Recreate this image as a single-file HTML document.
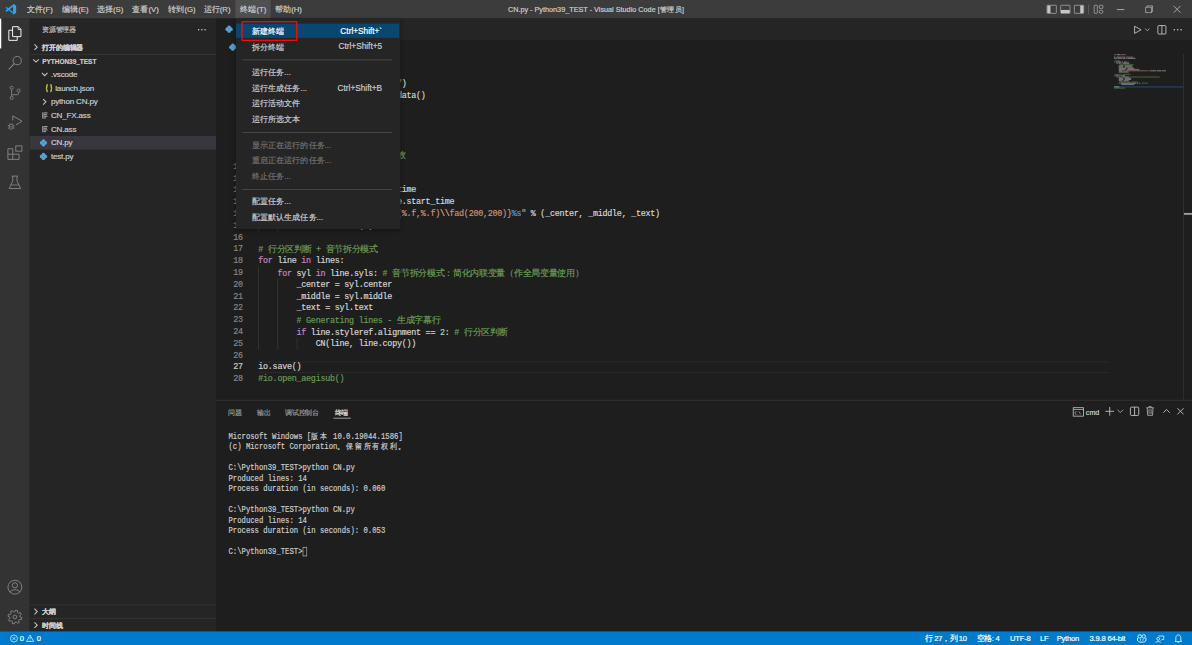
<!DOCTYPE html>
<html><head><meta charset="utf-8"><style>
html,body{margin:0;padding:0;width:1192px;height:645px;overflow:hidden;background:#1e1e1e;}
*{box-sizing:border-box;}
#root{position:absolute;left:0;top:0;width:1920px;height:1039px;-webkit-text-stroke:0.3px;transform:scale(0.6208333);transform-origin:0 0;font-family:"Liberation Sans",sans-serif;color:#cccccc;overflow:hidden;background:#1e1e1e;}
.a{position:absolute;}
svg{position:absolute;overflow:visible;}
#title{left:0;top:0;width:1920px;height:30px;background:#3c3c3c;font-size:12.5px;}
.mi{position:absolute;top:0;height:30px;line-height:30px;color:#cccccc;white-space:nowrap;}
#act{left:0;top:30px;width:48px;height:987px;background:#333333;}
#side{left:48px;top:30px;width:300px;height:987px;background:#252526;font-size:13px;letter-spacing:-0.3px;}
#editor{left:348px;top:30px;width:1572px;height:614px;background:#1e1e1e;overflow:hidden;}
#panel{left:348px;top:644px;width:1572px;height:373px;background:#1e1e1e;}
#status{left:0;top:1017px;width:1920px;height:22px;background:#007acc;color:#ffffff;font-size:12.2px;letter-spacing:-0.3px;}
.st{position:absolute;top:0;height:22px;line-height:22px;white-space:nowrap;}
.code{position:absolute;left:68px;font-family:"Liberation Mono",monospace;font-size:13.5px;letter-spacing:-0.4px;line-height:19px;height:19px;white-space:pre;color:#d4d4d4;}
.cj{font-family:"Liberation Sans",sans-serif;letter-spacing:0;font-size:14px;}
.k{color:#c586c0}.c{color:#6a9955}.s{color:#ce9178}.n{color:#b5cea8}.f{color:#569cd6}.e{color:#d7ba7d}
.ln{position:absolute;left:1px;width:42px;font-family:"Liberation Mono",monospace;font-size:13.5px;letter-spacing:-0.4px;line-height:19px;color:#858585;text-align:right;white-space:pre;}
#menu{left:379.5px;top:30px;width:265px;height:338.5px;background:#252526;box-shadow:0 2px 8px rgba(0,0,0,0.55);font-size:12.5px;}
.it{position:absolute;left:0;width:263px;height:23px;line-height:23px;color:#cccccc;white-space:nowrap;}
.it .l{position:absolute;left:26.5px;top:1.5px;}
.it .r{position:absolute;right:27px;top:0.3px;font-size:13.3px;}
.dis{color:#727272;}
.sep{position:absolute;left:10.5px;width:242px;height:1px;background:#5a5a5a;}
.row{position:absolute;left:0;width:300px;height:22px;line-height:22px;color:#cccccc;white-space:nowrap;}
.hd{font-size:11px;font-weight:bold;color:#cccccc;letter-spacing:0;}
.term{position:absolute;left:20px;font-family:"Liberation Mono",monospace;font-size:13.4px;letter-spacing:0;transform:scaleX(0.8731);transform-origin:0 0;line-height:17px;white-space:pre;color:#cccccc;}
.tcj{font-family:"Liberation Sans",sans-serif;letter-spacing:3.1px;font-size:13px;}
.ig{position:absolute;width:1px;background:#404040;}
</style></head><body><div id="root">
<div id="title" class="a">
<svg style="left:0px;top:0px;width:30px;height:30px" viewBox="0 0 30 30" ><path d="M10.3 12.2 L22 21.6" stroke="#1e95e0" stroke-width="2.4" stroke-linecap="round"/><path d="M10.3 17.4 L22 8.2" stroke="#29a8f5" stroke-width="2.6" stroke-linecap="round"/><path d="M21 6.6 L25.2 8.5 Q26 8.9 26 9.8 V20.2 Q26 21.1 25.2 21.5 L21 23.4 Z" fill="#2aa5f0"/></svg>
<div class="mi" style="left:43px">文件(F)</div>
<div class="mi" style="left:100px">编辑(E)</div>
<div class="mi" style="left:156px">选择(S)</div>
<div class="mi" style="left:213px">查看(V)</div>
<div class="mi" style="left:271px">转到(G)</div>
<div class="mi" style="left:328px">运行(R)</div>
<div class="a" style="left:379px;top:0;width:57px;height:30px;background:#505050"></div>
<div class="mi" style="left:387px">终端(T)</div>
<div class="mi" style="left:443px">帮助(H)</div>
<div class="mi" style="left:0;top:1px;width:1920px;text-align:center;font-size:11.7px">CN.py - Python39_TEST - Visual Studio Code [管理员]</div>
<svg style="left:1686px;top:8px;width:16px;height:14px" viewBox="0 0 16 14" ><rect x="0.5" y="0.5" width="15" height="13" rx="1" fill="none" stroke="#c5c5c5"/><rect x="1" y="1" width="5" height="12" fill="#c5c5c5"/></svg>
<svg style="left:1708px;top:8px;width:16px;height:14px" viewBox="0 0 16 14" ><rect x="0.5" y="0.5" width="15" height="13" rx="1" fill="none" stroke="#c5c5c5"/><rect x="1" y="8" width="14" height="5" fill="#c5c5c5"/></svg>
<svg style="left:1730px;top:8px;width:16px;height:14px" viewBox="0 0 16 14" ><rect x="0.5" y="0.5" width="15" height="13" rx="1" fill="none" stroke="#c5c5c5"/><rect x="10" y="1" width="5" height="12" fill="#c5c5c5"/></svg>
<div class="a" style="left:1753px;top:7px;width:1px;height:16px;background:#6a6a6a"></div>
<svg style="left:1762px;top:8px;width:15px;height:14px" viewBox="0 0 15 14" ><rect x="0.5" y="0.5" width="5" height="13" rx="1" fill="none" stroke="#c5c5c5"/><rect x="8.5" y="0.5" width="6" height="5" rx="1" fill="none" stroke="#c5c5c5"/><rect x="8.5" y="8.5" width="6" height="5" rx="2.5" fill="none" stroke="#c5c5c5"/></svg>
<svg style="left:1799px;top:15px;width:12px;height:2px" viewBox="0 0 12 2" ><rect x="0" y="0" width="12" height="1.2" fill="#c5c5c5"/></svg>
<svg style="left:1845px;top:9px;width:12px;height:12px" viewBox="0 0 12 12" ><rect x="0.5" y="2.5" width="9" height="9" fill="none" stroke="#c5c5c5"/><path d="M2.5 2.5 V0.5 H11.5 V9.5 H9.5" fill="none" stroke="#c5c5c5"/></svg>
<svg style="left:1890px;top:9px;width:12px;height:12px" viewBox="0 0 12 12" ><path d="M0.5 0.5 L11.5 11.5 M11.5 0.5 L0.5 11.5" stroke="#c5c5c5" stroke-width="1.2"/></svg>
</div>
<div id="act" class="a">
<div class="a" style="left:0;top:0;width:2px;height:48px;background:#ffffff"></div>
<svg style="left:0;top:0;width:48px;height:987px" viewBox="0 0 48 987"><path d="M20.25 13 H29.5 L33.75 17.25 V29 H20.25 Z" fill="none" stroke="#fff" stroke-width="1.5" stroke-linejoin="round"/><path d="M29.2 13 V17.5 H33.75" fill="none" stroke="#fff" stroke-width="1.2"/><path d="M20.25 18.75 H14.25 V35 H27.75 V29" fill="none" stroke="#fff" stroke-width="1.5" stroke-linejoin="round"/><circle cx="27.7" cy="67.6" r="6.6" fill="none" stroke="#858585" stroke-width="1.5"/><path d="M23 72.5 L14.5 81.5" stroke="#858585" stroke-width="1.7" stroke-linecap="round"/><circle cx="18.7" cy="111.4" r="2.5" fill="none" stroke="#858585" stroke-width="1.4"/><circle cx="18.7" cy="127.7" r="2.5" fill="none" stroke="#858585" stroke-width="1.4"/><circle cx="30" cy="115.9" r="2.5" fill="none" stroke="#858585" stroke-width="1.4"/><path d="M18.7 113.9 V125.2 M30 118.4 V120.3 Q30 122.6 27.7 122.6 H18.7" fill="none" stroke="#858585" stroke-width="1.4"/><path d="M20.6 164 V156.5 L35.5 165.3 L25.8 171" fill="none" stroke="#858585" stroke-width="1.5" stroke-linejoin="round"/><ellipse cx="18" cy="174" rx="3.4" ry="4.3" fill="none" stroke="#858585" stroke-width="1.4"/><path d="M12.5 172 H14.6 M12.5 176.5 H14.6 M21.4 172 H23.5 M21.4 176.5 H23.5 M15.5 169 L16.5 170.3 M20.5 169 L19.5 170.3 M14.6 174.2 H21.4" stroke="#858585" stroke-width="1.2"/><path d="M12.75 209.6 H20.6 V218.4 H30.75 V226.75 H12.75 Z M12.75 218.4 H20.6 V226.75" fill="none" stroke="#858585" stroke-width="1.5" stroke-linejoin="round"/><rect x="25.4" y="205" width="9.9" height="8.5" fill="none" stroke="#858585" stroke-width="1.5"/><path d="M18.5 253.7 H29 M20.6 253.7 V261.5 L14.8 273.6 H33.2 L27.4 261.5 V253.7" fill="none" stroke="#858585" stroke-width="1.5" stroke-linejoin="round"/><path d="M17.3 267.9 H30.7" stroke="#858585" stroke-width="1.3"/><circle cx="24" cy="915.8" r="11.2" fill="none" stroke="#858585" stroke-width="1.5"/><circle cx="24" cy="912.8" r="4.2" fill="none" stroke="#858585" stroke-width="1.5"/><path d="M16.3 923.8 C18 918.6 30 918.6 31.7 923.8" fill="none" stroke="#858585" stroke-width="1.5"/><path d="M32.40 963.80 L35.15 964.85 L34.35 968.09 L31.42 967.73 L29.94 969.74 L31.14 972.43 L28.29 974.15 L26.47 971.83 L24.00 972.20 L22.95 974.95 L19.71 974.15 L20.07 971.22 L18.06 969.74 L15.37 970.94 L13.65 968.09 L15.97 966.27 L15.60 963.80 L12.85 962.75 L13.65 959.51 L16.58 959.87 L18.06 957.86 L16.86 955.17 L19.71 953.45 L21.53 955.77 L24.00 955.40 L25.05 952.65 L28.29 953.45 L27.93 956.38 L29.94 957.86 L32.63 956.66 L34.35 959.51 L32.03 961.33 Z" fill="none" stroke="#858585" stroke-width="1.5" stroke-linejoin="round"/><circle cx="24" cy="963.8" r="3" fill="none" stroke="#858585" stroke-width="1.5"/></svg>
</div>
<div id="side" class="a">
<div class="row" style="top:0;height:35px;line-height:35px;left:20px;font-size:11px;color:#bbbbbb">资源管理器</div>
<svg style="left:267px;top:10px;width:20px;height:16px" viewBox="0 0 20 16" ><circle cx="5" cy="8" r="1.3" fill="#c5c5c5"/><circle cx="10.2" cy="8" r="1.3" fill="#c5c5c5"/><circle cx="15.4" cy="8" r="1.3" fill="#c5c5c5"/></svg>
<div class="row hd" style="top:35px"><span class="a" style="left:20px">打开的编辑器</span></div>
<svg style="left:2px;top:38px;width:16px;height:16px" viewBox="0 0 16 16" ><path d="M5.5 3.5 L10 8 L5.5 12.5" fill="none" stroke="#c5c5c5" stroke-width="1.7"/></svg>
<div class="a" style="left:0;top:57px;width:300px;height:1px;background:#3c3c3c"></div>
<div class="row hd" style="top:57px"><span class="a" style="left:20px;top:1.5px;font-size:10.4px">PYTHON39_TEST</span></div>
<svg style="left:2px;top:60px;width:16px;height:16px" viewBox="0 0 16 16" ><path d="M3.5 5.5 L8 10 L12.5 5.5" fill="none" stroke="#c5c5c5" stroke-width="1.7"/></svg>
<div class="row" style="top:79px;"><span class="a" style="left:34px">.vscode</span></div>
<svg style="left:16px;top:82px;width:16px;height:16px" viewBox="0 0 16 16" ><path d="M3.5 5.5 L8 10 L12.5 5.5" fill="none" stroke="#c5c5c5" stroke-width="1.7"/></svg>
<div class="row" style="top:101px;"><span class="a" style="left:41px">launch.json</span></div>
<svg style="left:23px;top:104px;width:16px;height:16px" viewBox="0 0 16 16" ><path d="M6 2.5 C4 2.5 4.5 4.5 4.5 6 C4.5 7.2 3.8 7.8 3 8 C3.8 8.2 4.5 8.8 4.5 10 C4.5 11.5 4 13.5 6 13.5 M10 2.5 C12 2.5 11.5 4.5 11.5 6 C11.5 7.2 12.2 7.8 13 8 C12.2 8.2 11.5 8.8 11.5 10 C11.5 11.5 12 13.5 10 13.5" fill="none" stroke="#cbcb41" stroke-width="2.1"/></svg>
<div class="row" style="top:123px;"><span class="a" style="left:34px">python CN.py</span></div>
<svg style="left:16px;top:126px;width:16px;height:16px" viewBox="0 0 16 16" ><path d="M5.5 3.5 L10 8 L5.5 12.5" fill="none" stroke="#c5c5c5" stroke-width="1.7"/></svg>
<div class="row" style="top:145px;"><span class="a" style="left:34px">CN_FX.ass</span></div>
<svg style="left:16px;top:148px;width:16px;height:16px" viewBox="0 0 16 16" ><rect x="4" y="3" width="2" height="10" fill="#9da2a4"/><rect x="6.5" y="3" width="6" height="1.8" fill="#9da2a4"/><rect x="6.5" y="5.7" width="5" height="1.8" fill="#9da2a4"/><rect x="6.5" y="8.4" width="6" height="1.8" fill="#9da2a4"/><rect x="6.5" y="11.1" width="3.5" height="1.8" fill="#9da2a4"/></svg>
<div class="row" style="top:167px;"><span class="a" style="left:34px">CN.ass</span></div>
<svg style="left:16px;top:170px;width:16px;height:16px" viewBox="0 0 16 16" ><rect x="4" y="3" width="2" height="10" fill="#9da2a4"/><rect x="6.5" y="3" width="6" height="1.8" fill="#9da2a4"/><rect x="6.5" y="5.7" width="5" height="1.8" fill="#9da2a4"/><rect x="6.5" y="8.4" width="6" height="1.8" fill="#9da2a4"/><rect x="6.5" y="11.1" width="3.5" height="1.8" fill="#9da2a4"/></svg>
<div class="row" style="top:189px;background:#37373d;"><span class="a" style="left:34px">CN.py</span></div>
<svg style="left:14px;top:192px;width:16px;height:16px" viewBox="0 0 16 16" ><circle cx="8" cy="5.1" r="3" fill="#56a3d2"/><circle cx="8" cy="10.9" r="3" fill="#56a3d2"/><circle cx="5.1" cy="8" r="3" fill="#56a3d2"/><circle cx="10.9" cy="8" r="3" fill="#56a3d2"/><path d="M6.3 6.3 L9.7 9.7" stroke="#3f86b0" stroke-width="0.8"/></svg>
<div class="row" style="top:211px;"><span class="a" style="left:34px">test.py</span></div>
<svg style="left:14px;top:214px;width:16px;height:16px" viewBox="0 0 16 16" ><circle cx="8" cy="5.1" r="3" fill="#56a3d2"/><circle cx="8" cy="10.9" r="3" fill="#56a3d2"/><circle cx="5.1" cy="8" r="3" fill="#56a3d2"/><circle cx="10.9" cy="8" r="3" fill="#56a3d2"/><path d="M6.3 6.3 L9.7 9.7" stroke="#3f86b0" stroke-width="0.8"/></svg>
<div class="a" style="left:0;top:944px;width:300px;height:1px;background:#3c3c3c"></div>
<div class="row hd" style="top:944px"><span class="a" style="left:20px">大纲</span></div>
<svg style="left:2px;top:947px;width:16px;height:16px" viewBox="0 0 16 16" ><path d="M5.5 3.5 L10 8 L5.5 12.5" fill="none" stroke="#c5c5c5" stroke-width="1.7"/></svg>
<div class="a" style="left:0;top:966px;width:300px;height:1px;background:#3c3c3c"></div>
<div class="row hd" style="top:966px"><span class="a" style="left:20px">时间线</span></div>
<svg style="left:2px;top:969px;width:16px;height:16px" viewBox="0 0 16 16" ><path d="M5.5 3.5 L10 8 L5.5 12.5" fill="none" stroke="#c5c5c5" stroke-width="1.7"/></svg>
</div>
<div id="editor" class="a">
<div class="a" style="left:0;top:0;width:1572px;height:35px;background:#252526"></div>
<div class="a" style="left:0;top:0;width:140px;height:35px;background:#1e1e1e"></div>
<svg style="left:13px;top:9px;width:16px;height:16px" viewBox="0 0 16 16" ><circle cx="8" cy="5.1" r="3" fill="#56a3d2"/><circle cx="8" cy="10.9" r="3" fill="#56a3d2"/><circle cx="5.1" cy="8" r="3" fill="#56a3d2"/><circle cx="10.9" cy="8" r="3" fill="#56a3d2"/><path d="M6.3 6.3 L9.7 9.7" stroke="#3f86b0" stroke-width="0.8"/></svg>
<span class="a" style="left:36px;top:0;line-height:35px;font-size:12.5px;color:#ffffff">CN.py</span>
<svg style="left:19px;top:38px;width:16px;height:16px" viewBox="0 0 16 16" ><circle cx="8" cy="5.1" r="3" fill="#56a3d2"/><circle cx="8" cy="10.9" r="3" fill="#56a3d2"/><circle cx="5.1" cy="8" r="3" fill="#56a3d2"/><circle cx="10.9" cy="8" r="3" fill="#56a3d2"/><path d="M6.3 6.3 L9.7 9.7" stroke="#3f86b0" stroke-width="0.8"/></svg>
<svg style="left:1478px;top:10px;width:14px;height:16px" viewBox="0 0 14 16" ><path d="M1.5 2.2 L12 8 L1.5 13.8 Z" fill="none" stroke="#c5c5c5" stroke-width="1.4" stroke-linejoin="round"/></svg>
<svg style="left:1495px;top:14px;width:10px;height:8px" viewBox="0 0 10 8" ><path d="M1.5 2 L5 5.5 L8.5 2" fill="none" stroke="#c5c5c5" stroke-width="1.2"/></svg>
<svg style="left:1516px;top:10px;width:15px;height:16px" viewBox="0 0 15 16" ><rect x="1" y="1.2" width="13" height="13.6" rx="1.5" fill="none" stroke="#c5c5c5" stroke-width="1.4"/><path d="M7.5 1 V15" stroke="#c5c5c5" stroke-width="1.4"/></svg>
<svg style="left:1541px;top:10px;width:16px;height:16px" viewBox="0 0 16 16" ><circle cx="2.5" cy="8" r="1.3" fill="#c5c5c5"/><circle cx="8" cy="8" r="1.3" fill="#c5c5c5"/><circle cx="13.5" cy="8" r="1.3" fill="#c5c5c5"/></svg>
<div class="a" style="left:68px;top:552px;width:1370px;height:19px;border-top:2px solid #282828;border-bottom:2px solid #282828"></div>
<div class="ig" style="left:68.0px;top:191px;height:152px"></div>
<div class="ig" style="left:98.8px;top:229px;height:114px"></div>
<div class="ig" style="left:68.0px;top:400px;height:133px"></div>
<div class="ig" style="left:98.8px;top:419px;height:114px"></div>
<div class="ig" style="left:129.6px;top:514px;height:19px"></div>
<div class="ln" style="top:58px;color:#858585">1</div>
<div class="code" style="top:58px"><span class="k">from</span> pyonfx <span class="k">import</span> *</div>
<div class="ln" style="top:77px;color:#858585">2</div>
<div class="ln" style="top:96px;color:#858585">3</div>
<div class="code" style="top:96px">io = Ass(<span class="s">"CN.ass"</span>, <span class="s">"CN_FX.ass"</span>)</div>
<div class="ln" style="top:115px;color:#858585">4</div>
<div class="code" style="top:115px">meta, styles, lines = io.get_data()</div>
<div class="ln" style="top:134px;color:#858585">5</div>
<div class="ln" style="top:153px;color:#858585">6</div>
<div class="ln" style="top:172px;color:#858585">7</div>
<div class="code" style="top:172px"><span class="f">def</span> CN(line, l):</div>
<div class="ln" style="top:191px;color:#858585">8</div>
<div class="ln" style="top:210px;color:#858585">9</div>
<div class="code" style="top:210px">                             <span class="c"><span class="cj">效</span></span></div>
<div class="ln" style="top:229px;color:#858585">10</div>
<div class="ln" style="top:248px;color:#858585">11</div>
<div class="ln" style="top:267px;color:#858585">12</div>
<div class="code" style="top:267px">                             time</div>
<div class="ln" style="top:286px;color:#858585">13</div>
<div class="code" style="top:286px">                             e.start_time</div>
<div class="ln" style="top:305px;color:#858585">14</div>
<div class="code" style="top:305px">                             <span class="s">(%.f,%.f)</span><span class="e">\\</span><span class="s">fad(200,200)}</span><span class="f">%s</span><span class="s">"</span> % (_center, _middle, _text)</div>
<div class="ln" style="top:324px;color:#858585">15</div>
<div class="code" style="top:324px">        io.write_line(l)</div>
<div class="ln" style="top:343px;color:#858585">16</div>
<div class="ln" style="top:362px;color:#858585">17</div>
<div class="code" style="top:362px"><span class="c"># <span class="cj">行分区判断</span> + <span class="cj">音节拆分模式</span></span></div>
<div class="ln" style="top:381px;color:#858585">18</div>
<div class="code" style="top:381px"><span class="k">for</span> line <span class="k">in</span> lines:</div>
<div class="ln" style="top:400px;color:#858585">19</div>
<div class="code" style="top:400px">    <span class="k">for</span> syl <span class="k">in</span> line.syls: <span class="c"># <span class="cj">音节拆分模式：简化内联变量（作全局变量使用）</span></span></div>
<div class="ln" style="top:419px;color:#858585">20</div>
<div class="code" style="top:419px">        _center = syl.center</div>
<div class="ln" style="top:438px;color:#858585">21</div>
<div class="code" style="top:438px">        _middle = syl.middle</div>
<div class="ln" style="top:457px;color:#858585">22</div>
<div class="code" style="top:457px">        _text = syl.text</div>
<div class="ln" style="top:476px;color:#858585">23</div>
<div class="code" style="top:476px">        <span class="c"># Generating lines - <span class="cj">生成字幕行</span></span></div>
<div class="ln" style="top:495px;color:#858585">24</div>
<div class="code" style="top:495px">        <span class="k">if</span> line.styleref.alignment == <span class="n">2</span>: <span class="c"># <span class="cj">行分区判断</span></span></div>
<div class="ln" style="top:514px;color:#858585">25</div>
<div class="code" style="top:514px">            CN(line, line.copy())</div>
<div class="ln" style="top:533px;color:#858585">26</div>
<div class="ln" style="top:552px;color:#c6c6c6">27</div>
<div class="code" style="top:552px">io.save()</div>
<div class="ln" style="top:571px;color:#858585">28</div>
<div class="code" style="top:571px"><span class="c">#io.open_aegisub()</span></div>
<div class="a" style="left:1446px;top:57px;width:112px;height:557px;overflow:hidden">
<div class="a" style="left:0;top:52px;width:113px;height:2px;background:#264f78;opacity:0.75"></div>
<div class="a" style="left:0px;top:0px;width:4px;height:2px;background:#c586c0;opacity:0.45"></div>
<div class="a" style="left:5px;top:0px;width:6px;height:2px;background:#d4d4d4;opacity:0.45"></div>
<div class="a" style="left:12px;top:0px;width:6px;height:2px;background:#c586c0;opacity:0.45"></div>
<div class="a" style="left:19px;top:0px;width:1px;height:2px;background:#d4d4d4;opacity:0.45"></div>
<div class="a" style="left:0px;top:4px;width:2px;height:2px;background:#d4d4d4;opacity:0.45"></div>
<div class="a" style="left:3px;top:4px;width:1px;height:2px;background:#d4d4d4;opacity:0.45"></div>
<div class="a" style="left:5px;top:4px;width:4px;height:2px;background:#d4d4d4;opacity:0.45"></div>
<div class="a" style="left:9px;top:4px;width:8px;height:2px;background:#ce9178;opacity:0.45"></div>
<div class="a" style="left:17px;top:4px;width:1px;height:2px;background:#d4d4d4;opacity:0.45"></div>
<div class="a" style="left:19px;top:4px;width:11px;height:2px;background:#ce9178;opacity:0.45"></div>
<div class="a" style="left:30px;top:4px;width:1px;height:2px;background:#d4d4d4;opacity:0.45"></div>
<div class="a" style="left:0px;top:6px;width:5px;height:2px;background:#d4d4d4;opacity:0.45"></div>
<div class="a" style="left:6px;top:6px;width:7px;height:2px;background:#d4d4d4;opacity:0.45"></div>
<div class="a" style="left:14px;top:6px;width:5px;height:2px;background:#d4d4d4;opacity:0.45"></div>
<div class="a" style="left:20px;top:6px;width:1px;height:2px;background:#d4d4d4;opacity:0.45"></div>
<div class="a" style="left:22px;top:6px;width:13px;height:2px;background:#d4d4d4;opacity:0.45"></div>
<div class="a" style="left:0px;top:10px;width:1px;height:2px;background:#6a9955;opacity:0.45"></div>
<div class="a" style="left:2px;top:10px;width:8px;height:2px;background:#6a9955;opacity:0.45"></div>
<div class="a" style="left:0px;top:12px;width:3px;height:2px;background:#569cd6;opacity:0.45"></div>
<div class="a" style="left:4px;top:12px;width:2px;height:2px;background:#dcdcaa;opacity:0.45"></div>
<div class="a" style="left:6px;top:12px;width:6px;height:2px;background:#d4d4d4;opacity:0.45"></div>
<div class="a" style="left:13px;top:12px;width:2px;height:2px;background:#d4d4d4;opacity:0.45"></div>
<div class="a" style="left:16px;top:12px;width:5px;height:2px;background:#d4d4d4;opacity:0.45"></div>
<div class="a" style="left:22px;top:12px;width:2px;height:2px;background:#ce9178;opacity:0.45"></div>
<div class="a" style="left:4px;top:14px;width:3px;height:2px;background:#c586c0;opacity:0.45"></div>
<div class="a" style="left:8px;top:14px;width:3px;height:2px;background:#d4d4d4;opacity:0.45"></div>
<div class="a" style="left:12px;top:14px;width:2px;height:2px;background:#c586c0;opacity:0.45"></div>
<div class="a" style="left:15px;top:14px;width:10px;height:2px;background:#d4d4d4;opacity:0.45"></div>
<div class="a" style="left:8px;top:16px;width:1px;height:2px;background:#6a9955;opacity:0.45"></div>
<div class="a" style="left:10px;top:16px;width:22px;height:2px;background:#6a9955;opacity:0.45"></div>
<div class="a" style="left:8px;top:18px;width:7px;height:2px;background:#d4d4d4;opacity:0.45"></div>
<div class="a" style="left:16px;top:18px;width:1px;height:2px;background:#d4d4d4;opacity:0.45"></div>
<div class="a" style="left:18px;top:18px;width:12px;height:2px;background:#d4d4d4;opacity:0.45"></div>
<div class="a" style="left:8px;top:20px;width:7px;height:2px;background:#d4d4d4;opacity:0.45"></div>
<div class="a" style="left:16px;top:20px;width:1px;height:2px;background:#d4d4d4;opacity:0.45"></div>
<div class="a" style="left:18px;top:20px;width:12px;height:2px;background:#d4d4d4;opacity:0.45"></div>
<div class="a" style="left:8px;top:22px;width:12px;height:2px;background:#d4d4d4;opacity:0.45"></div>
<div class="a" style="left:21px;top:22px;width:1px;height:2px;background:#d4d4d4;opacity:0.45"></div>
<div class="a" style="left:23px;top:22px;width:10px;height:2px;background:#d4d4d4;opacity:0.45"></div>
<div class="a" style="left:8px;top:24px;width:10px;height:2px;background:#d4d4d4;opacity:0.45"></div>
<div class="a" style="left:19px;top:24px;width:1px;height:2px;background:#d4d4d4;opacity:0.45"></div>
<div class="a" style="left:21px;top:24px;width:20px;height:2px;background:#d4d4d4;opacity:0.45"></div>
<div class="a" style="left:8px;top:26px;width:6px;height:2px;background:#d4d4d4;opacity:0.45"></div>
<div class="a" style="left:15px;top:26px;width:1px;height:2px;background:#d4d4d4;opacity:0.45"></div>
<div class="a" style="left:17px;top:26px;width:36px;height:2px;background:#ce9178;opacity:0.45"></div>
<div class="a" style="left:53px;top:26px;width:2px;height:2px;background:#569cd6;opacity:0.45"></div>
<div class="a" style="left:55px;top:26px;width:1px;height:2px;background:#ce9178;opacity:0.45"></div>
<div class="a" style="left:57px;top:26px;width:1px;height:2px;background:#d4d4d4;opacity:0.45"></div>
<div class="a" style="left:59px;top:26px;width:9px;height:2px;background:#d4d4d4;opacity:0.45"></div>
<div class="a" style="left:69px;top:26px;width:8px;height:2px;background:#d4d4d4;opacity:0.45"></div>
<div class="a" style="left:78px;top:26px;width:6px;height:2px;background:#d4d4d4;opacity:0.45"></div>
<div class="a" style="left:8px;top:28px;width:16px;height:2px;background:#d4d4d4;opacity:0.45"></div>
<div class="a" style="left:0px;top:32px;width:1px;height:2px;background:#6a9955;opacity:0.45"></div>
<div class="a" style="left:2px;top:32px;width:10px;height:2px;background:#6a9955;opacity:0.45"></div>
<div class="a" style="left:13px;top:32px;width:1px;height:2px;background:#6a9955;opacity:0.45"></div>
<div class="a" style="left:15px;top:32px;width:12px;height:2px;background:#6a9955;opacity:0.45"></div>
<div class="a" style="left:0px;top:34px;width:3px;height:2px;background:#c586c0;opacity:0.45"></div>
<div class="a" style="left:4px;top:34px;width:4px;height:2px;background:#d4d4d4;opacity:0.45"></div>
<div class="a" style="left:9px;top:34px;width:2px;height:2px;background:#c586c0;opacity:0.45"></div>
<div class="a" style="left:12px;top:34px;width:6px;height:2px;background:#d4d4d4;opacity:0.45"></div>
<div class="a" style="left:4px;top:36px;width:3px;height:2px;background:#c586c0;opacity:0.45"></div>
<div class="a" style="left:8px;top:36px;width:3px;height:2px;background:#d4d4d4;opacity:0.45"></div>
<div class="a" style="left:12px;top:36px;width:2px;height:2px;background:#c586c0;opacity:0.45"></div>
<div class="a" style="left:15px;top:36px;width:10px;height:2px;background:#d4d4d4;opacity:0.45"></div>
<div class="a" style="left:26px;top:36px;width:1px;height:2px;background:#6a9955;opacity:0.45"></div>
<div class="a" style="left:28px;top:36px;width:12px;height:2px;background:#6a9955;opacity:0.45"></div>
<div class="a" style="left:40px;top:36px;width:34px;height:2px;background:#6a9955;opacity:0.45"></div>
<div class="a" style="left:8px;top:38px;width:7px;height:2px;background:#d4d4d4;opacity:0.45"></div>
<div class="a" style="left:16px;top:38px;width:1px;height:2px;background:#d4d4d4;opacity:0.45"></div>
<div class="a" style="left:18px;top:38px;width:10px;height:2px;background:#d4d4d4;opacity:0.45"></div>
<div class="a" style="left:8px;top:40px;width:7px;height:2px;background:#d4d4d4;opacity:0.45"></div>
<div class="a" style="left:16px;top:40px;width:1px;height:2px;background:#d4d4d4;opacity:0.45"></div>
<div class="a" style="left:18px;top:40px;width:10px;height:2px;background:#d4d4d4;opacity:0.45"></div>
<div class="a" style="left:8px;top:42px;width:5px;height:2px;background:#d4d4d4;opacity:0.45"></div>
<div class="a" style="left:14px;top:42px;width:1px;height:2px;background:#d4d4d4;opacity:0.45"></div>
<div class="a" style="left:16px;top:42px;width:8px;height:2px;background:#d4d4d4;opacity:0.45"></div>
<div class="a" style="left:8px;top:44px;width:1px;height:2px;background:#6a9955;opacity:0.45"></div>
<div class="a" style="left:10px;top:44px;width:10px;height:2px;background:#6a9955;opacity:0.45"></div>
<div class="a" style="left:21px;top:44px;width:5px;height:2px;background:#6a9955;opacity:0.45"></div>
<div class="a" style="left:27px;top:44px;width:1px;height:2px;background:#6a9955;opacity:0.45"></div>
<div class="a" style="left:29px;top:44px;width:10px;height:2px;background:#6a9955;opacity:0.45"></div>
<div class="a" style="left:8px;top:46px;width:2px;height:2px;background:#c586c0;opacity:0.45"></div>
<div class="a" style="left:11px;top:46px;width:25px;height:2px;background:#d4d4d4;opacity:0.45"></div>
<div class="a" style="left:37px;top:46px;width:2px;height:2px;background:#d4d4d4;opacity:0.45"></div>
<div class="a" style="left:40px;top:46px;width:2px;height:2px;background:#b5cea8;opacity:0.45"></div>
<div class="a" style="left:43px;top:46px;width:1px;height:2px;background:#6a9955;opacity:0.45"></div>
<div class="a" style="left:45px;top:46px;width:10px;height:2px;background:#6a9955;opacity:0.45"></div>
<div class="a" style="left:12px;top:48px;width:21px;height:2px;background:#d4d4d4;opacity:0.45"></div>
<div class="a" style="left:0px;top:52px;width:9px;height:2px;background:#d4d4d4;opacity:0.45"></div>
<div class="a" style="left:0px;top:54px;width:18px;height:2px;background:#6a9955;opacity:0.45"></div>
</div>
<div class="a" style="left:1558px;top:57px;width:1px;height:557px;background:#3a3a3a"></div>
<div class="a" style="left:1559px;top:313px;width:13px;height:3px;background:#a0a0a0"></div>
</div>
<div id="panel" class="a">
<div class="a" style="left:0;top:0;width:1572px;height:1px;background:#414141"></div>
<span class="a" style="left:20px;top:2.5px;line-height:35px;font-size:11px;color:#969696">问题</span>
<span class="a" style="left:66.5px;top:2.5px;line-height:35px;font-size:11px;color:#969696">输出</span>
<span class="a" style="left:111px;top:2.5px;line-height:35px;font-size:11px;color:#969696">调试控制台</span>
<span class="a" style="left:191px;top:2.5px;line-height:35px;font-size:11px;color:#e7e7e7">终端</span>
<div class="a" style="left:189px;top:29px;width:28px;height:1px;background:#e7e7e7"></div>
<svg style="left:1380px;top:12px;width:18px;height:15px" viewBox="0 0 18 15" ><rect x="0.7" y="0.7" width="16.6" height="13.6" fill="none" stroke="#c5c5c5" stroke-width="1.3"/><path d="M0.7 3.6 H17.3" stroke="#c5c5c5" stroke-width="1.1"/><path d="M6 7 A2 2.2 0 1 0 6 11.3 M8 11 V11.5 M8 7.5 V8 M10 6.5 L12.5 11.5" fill="none" stroke="#c5c5c5" stroke-width="0.9"/></svg>
<span class="a" style="left:1401px;top:2.5px;line-height:35px;font-size:11.5px;color:#cccccc">cmd</span>
<svg style="left:1432px;top:11px;width:15px;height:15px" viewBox="0 0 15 15" ><path d="M7.5 0.5 V14.5 M0.5 7.5 H14.5" stroke="#c5c5c5" stroke-width="1.4"/></svg>
<svg style="left:1451px;top:15px;width:11px;height:7px" viewBox="0 0 11 7" ><path d="M1 1 L5.5 5.5 L10 1" fill="none" stroke="#c5c5c5" stroke-width="1.2"/></svg>
<svg style="left:1472px;top:11px;width:15px;height:15px" viewBox="0 0 15 15" ><rect x="0.8" y="0.8" width="13.4" height="13.4" rx="1.5" fill="none" stroke="#c5c5c5" stroke-width="1.4"/><path d="M7.5 0.8 V14.2" stroke="#c5c5c5" stroke-width="1.4"/></svg>
<svg style="left:1498px;top:10px;width:13px;height:16px" viewBox="0 0 13 16" ><path d="M0.5 2.8 H12.5 M4.5 2.5 V1 H8.5 V2.5 M1.8 3 L2.6 15 H10.4 L11.2 3" fill="none" stroke="#c5c5c5" stroke-width="1.2"/><path d="M4.5 5 V13 M6.5 5 V13 M8.5 5 V13" stroke="#c5c5c5" stroke-width="0.8"/></svg>
<svg style="left:1525px;top:14px;width:12px;height:8px" viewBox="0 0 12 8" ><path d="M0.8 6.8 L6 1.5 L11.2 6.8" fill="none" stroke="#c5c5c5" stroke-width="1.4"/></svg>
<svg style="left:1548px;top:13px;width:11px;height:11px" viewBox="0 0 11 11" ><path d="M0.5 0.5 L10.5 10.5 M10.5 0.5 L0.5 10.5" stroke="#c5c5c5" stroke-width="1.4"/></svg>
<div class="term" style="top:49.80px">Microsoft Windows [<span class="tcj">版本</span> 10.0.19044.1586]</div>
<div class="term" style="top:66.80px">(c) Microsoft Corporation<span class="tcj">。保留所有权利。</span></div>
<div class="term" style="top:83.80px"></div>
<div class="term" style="top:100.80px">C:\Python39_TEST&gt;python CN.py</div>
<div class="term" style="top:117.80px">Produced lines: 14</div>
<div class="term" style="top:134.80px">Process duration (in seconds): 0.060</div>
<div class="term" style="top:151.80px"></div>
<div class="term" style="top:168.80px">C:\Python39_TEST&gt;python CN.py</div>
<div class="term" style="top:185.80px">Produced lines: 14</div>
<div class="term" style="top:202.80px">Process duration (in seconds): 0.053</div>
<div class="term" style="top:219.80px"></div>
<div class="term" style="top:236.80px">C:\Python39_TEST&gt;<span style="display:inline-block;width:8px;height:15px;border:1px solid #cccccc;vertical-align:-3px"></span></div>
</div>
<div id="status" class="a">
<svg style="left:16px;top:5px;width:13px;height:13px" viewBox="0 0 13 13" ><circle cx="6.5" cy="6.5" r="5.6" fill="none" stroke="#ffffff" stroke-width="1.1"/><path d="M4.2 4.2 L8.8 8.8 M8.8 4.2 L4.2 8.8" stroke="#ffffff" stroke-width="1.1"/></svg>
<span class="st" style="left:32px">0</span>
<svg style="left:42px;top:5px;width:13px;height:12px" viewBox="0 0 13 12" ><path d="M6.5 0.8 L12.3 11.3 H0.7 Z" fill="none" stroke="#ffffff" stroke-width="1.1" stroke-linejoin="round"/><path d="M6.5 4 V7.8 M6.5 8.8 V10" stroke="#ffffff" stroke-width="1.1"/></svg>
<span class="st" style="left:59px">0</span>
<span class="st" style="left:1490px">行 27，列 10</span>
<span class="st" style="left:1574px">空格: 4</span>
<span class="st" style="left:1627px">UTF-8</span>
<span class="st" style="left:1675px">LF</span>
<span class="st" style="left:1702px">Python</span>
<span class="st" style="left:1755px">3.9.8 64-bit</span>
<svg style="left:1831px;top:4px;width:16px;height:15px" viewBox="0 0 16 15" ><rect x="2" y="1.5" width="5.6" height="5.2" rx="2.4" fill="none" stroke="#ffffff" stroke-width="1.4"/><rect x="8.4" y="1.5" width="5.6" height="5.2" rx="2.4" fill="none" stroke="#ffffff" stroke-width="1.4"/><path d="M1.2 6.5 V9.8 Q1.2 13.4 8 13.4 Q14.8 13.4 14.8 9.8 V6.5" fill="none" stroke="#ffffff" stroke-width="1.4"/><path d="M6 8.6 V10.8 M10 8.6 V10.8" stroke="#ffffff" stroke-width="1.3"/></svg>
<svg style="left:1860px;top:4px;width:16px;height:15px" viewBox="0 0 16 15" ><path d="M6 3.5 H14.5 V9 H11.5 L9.5 11" fill="none" stroke="#ffffff" stroke-width="1.2"/><circle cx="5.5" cy="8" r="2.3" fill="none" stroke="#ffffff" stroke-width="1.2"/><path d="M1.5 14.5 C2 11.5 9 11.5 9.5 14.5" fill="none" stroke="#ffffff" stroke-width="1.2"/></svg>
<svg style="left:1891px;top:4px;width:14px;height:15px" viewBox="0 0 14 15" ><path d="M3 11 V6.5 C3 3.5 4.8 1.8 7 1.8 C9.2 1.8 11 3.5 11 6.5 V11 L12.5 12.3 H1.5 Z" fill="none" stroke="#ffffff" stroke-width="1.2" stroke-linejoin="round"/><path d="M5.5 13.5 C6 14.6 8 14.6 8.5 13.5" fill="none" stroke="#ffffff" stroke-width="1.1"/></svg>
</div>
<div id="menu" class="a">
<div class="it" style="top:8.0px;background:#094771;color:#ffffff;"><span class="l">新建终端</span><span class="r">Ctrl+Shift+`</span></div>
<div class="it" style="top:33.2px;"><span class="l">拆分终端</span><span class="r">Ctrl+Shift+5</span></div>
<div class="sep" style="top:66.4px"></div>
<div class="it" style="top:74.4px;"><span class="l">运行任务...</span><span class="r"></span></div>
<div class="it" style="top:99.6px;"><span class="l">运行生成任务...</span><span class="r">Ctrl+Shift+B</span></div>
<div class="it" style="top:124.8px;"><span class="l">运行活动文件</span><span class="r"></span></div>
<div class="it" style="top:150.0px;"><span class="l">运行所选文本</span><span class="r"></span></div>
<div class="sep" style="top:183.2px"></div>
<div class="it dis" style="top:191.2px;"><span class="l">显示正在运行的任务...</span><span class="r"></span></div>
<div class="it dis" style="top:216.4px;"><span class="l">重启正在运行的任务...</span><span class="r"></span></div>
<div class="it dis" style="top:241.6px;"><span class="l">终止任务...</span><span class="r"></span></div>
<div class="sep" style="top:274.8px"></div>
<div class="it" style="top:282.8px;"><span class="l">配置任务...</span><span class="r"></span></div>
<div class="it" style="top:308.0px;"><span class="l">配置默认生成任务...</span><span class="r"></span></div>
</div>
<div class="a" style="left:389px;top:34px;width:90px;height:32px;border:2px solid #f01010"></div>
</div></body></html>
